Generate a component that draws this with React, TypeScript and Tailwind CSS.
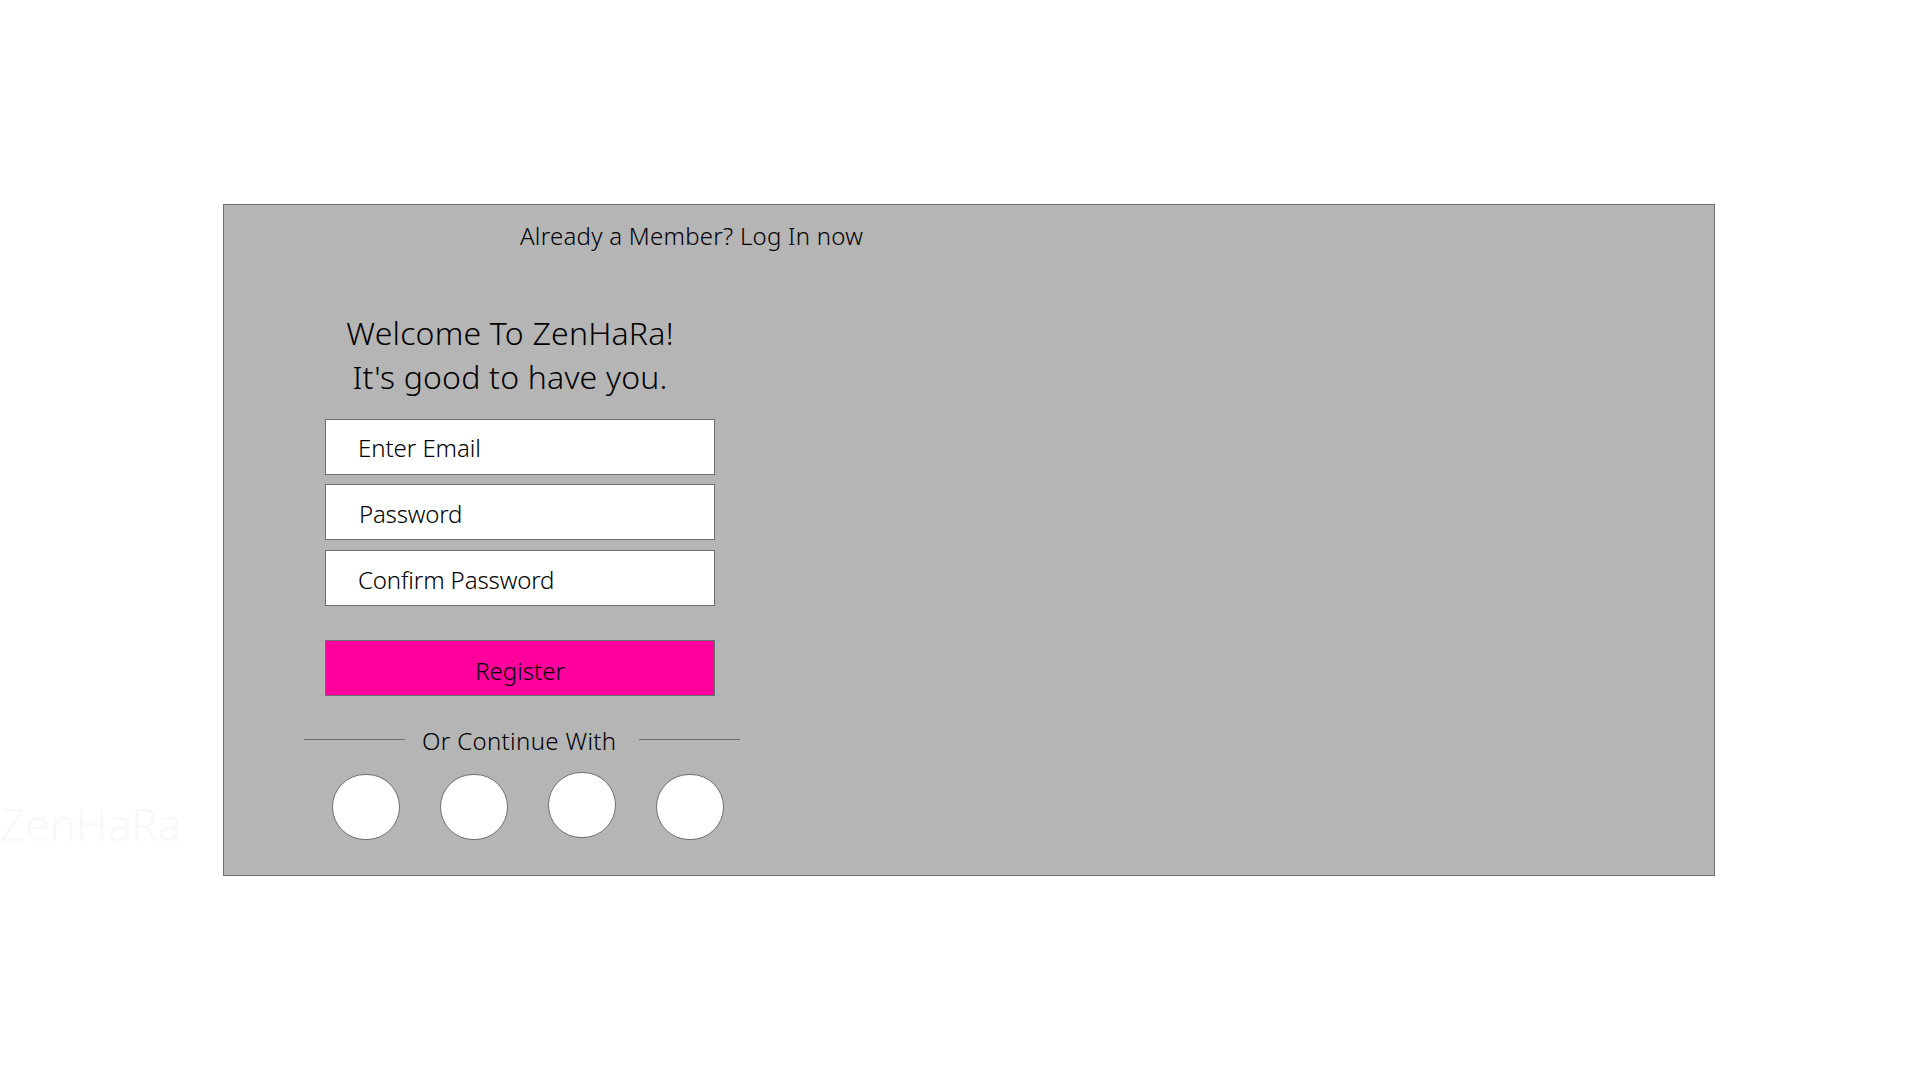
const FIELDS = [
  { label: "Enter Email", indent: "pl-[32px] pb-[2px] -mb-px", tracking: "tracking-[-0.05px]" },
  { label: "Password", indent: "pl-[33px]", tracking: "tracking-[-0.2px]" },
  { label: "Confirm Password", indent: "pl-[32px]", tracking: "tracking-[-0.12px]" },
];

const SOCIALS = ["mt-[2px]", "mt-[2px]", "mt-0", "mt-[2px]"];

export default function App() {
  return (
    <div className="relative min-h-[1080px] bg-white pl-[223px] pt-[204px] font-['Noto_Sans',sans-serif] font-light text-black">
      {/* Watermark */}
      <span className="absolute left-0 top-[796px] text-[44px] leading-[56px] text-[#f8f8f8]">ZenHaRa</span>

      <div className="h-[672px] w-[1492px] border border-[#6f6f6f] bg-[#b5b5b5]">
        <p className="ml-[296px] mt-[15px] text-[24px] leading-[32px] tracking-[0.25px]">Already a Member? Log In now</p>

        <div className="ml-[100px] mt-[59px] w-[372px] text-center text-[32px] leading-[44px] tracking-[0.2px]">
          <p>Welcome To ZenHaRa!</p>
          <p>It's good to have you.</p>
        </div>

        <div className="ml-[101px] mt-[20px] flex w-[390px] flex-col gap-[10px]">
          {FIELDS.map((field) => (
            <div
              key={field.label}
              className={`flex h-[56px] items-center border border-[#6f6f6f] bg-white text-[24px] ${field.indent} ${field.tracking}`}
            >
              <span className="mt-[3px]">{field.label}</span>
            </div>
          ))}
        </div>

        <button className="ml-[101px] mt-[34px] block h-[56px] w-[390px] border border-[#6f6f6f] bg-[#ff009c] pt-[5px] text-[24px]">
          Register
        </button>

        <div className="ml-[80px] mt-[21px] flex w-[436px] items-center">
          <div className="h-px w-[101px] bg-[#6f6f6f]" />
          <span className="ml-[17px] w-[217px] pt-[4px] text-[24px] leading-[40px] tracking-[0.34px]">Or Continue With</span>
          <div className="h-px w-[101px] bg-[#6f6f6f]" />
        </div>

        <div className="ml-[108px] mt-[11px] flex gap-[40px]">
          {SOCIALS.map((offset, i) => (
            <div key={i} className={`h-[66px] w-[68px] rounded-full border border-[#6f6f6f] bg-white ${offset}`} />
          ))}
        </div>
      </div>
    </div>
  );
}
